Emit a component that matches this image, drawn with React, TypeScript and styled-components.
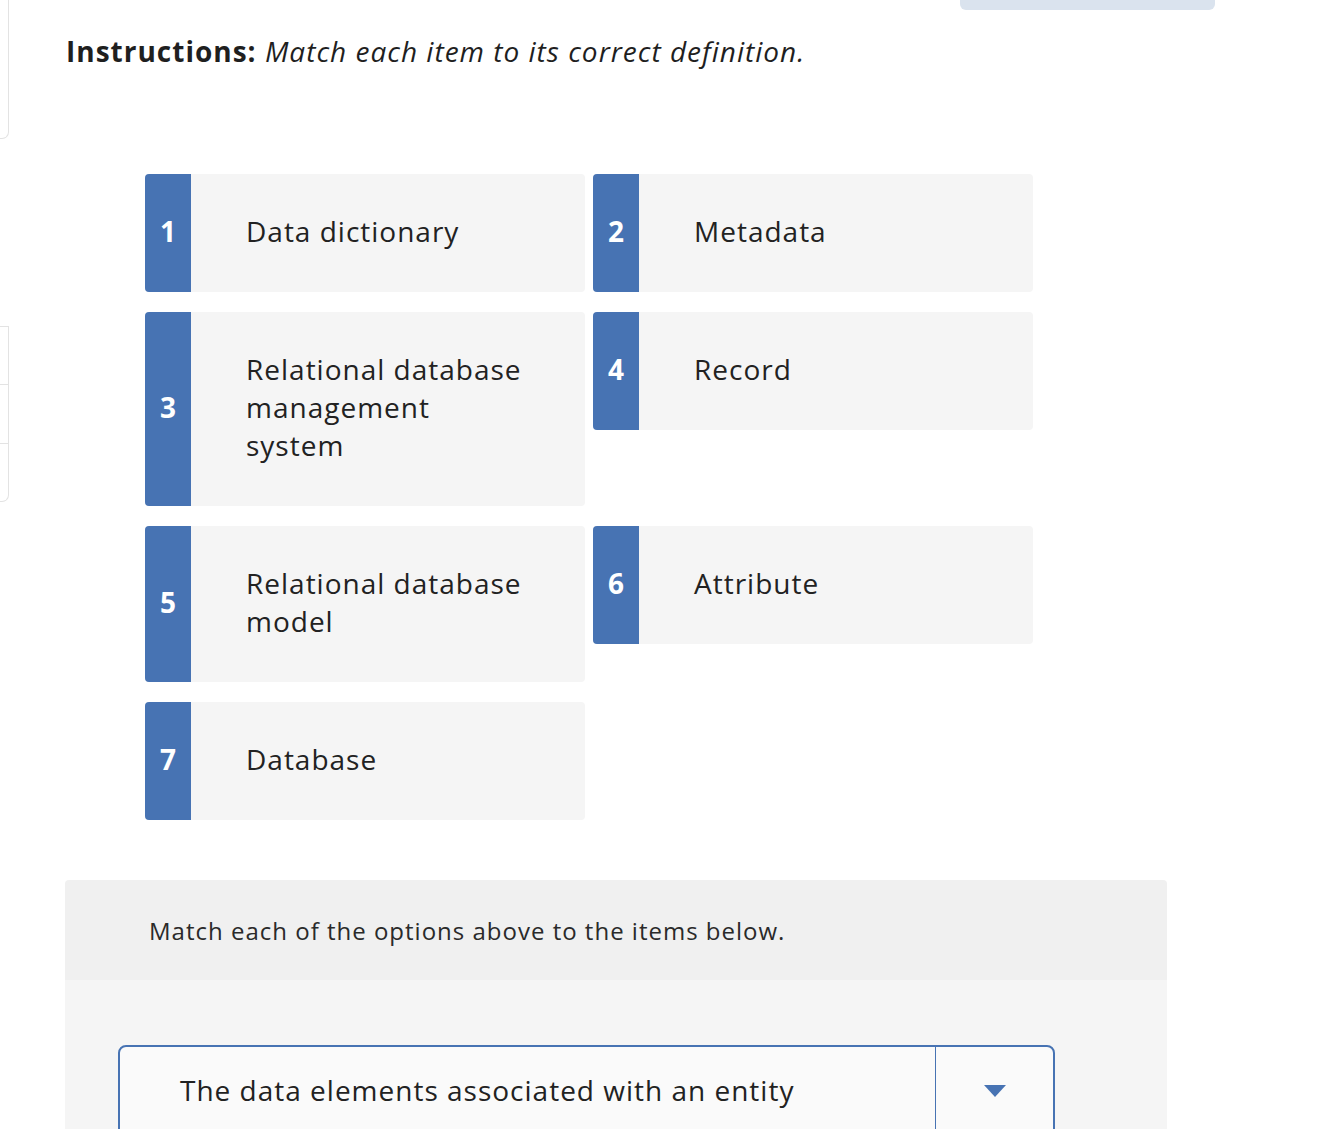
import styled, { createGlobalStyle } from "styled-components"

const GlobalStyle = createGlobalStyle`
    body {
        margin: 0;
        background: #ffffff;
        font-family: "Open Sans", Lato, sans-serif;
        color: #222222;
    }
`

const Page = styled.div`
    display: flex;
    height: 1129px;
    overflow: hidden;
`

const Sidebar = styled.div`
    width: 9px;
    flex-shrink: 0;
    display: flex;
    flex-direction: column;
`

const SideBox = styled.div<{ $top: number; $height: number }>`
    margin-top: ${p => p.$top}px;
    height: ${p => p.$height}px;
    box-sizing: border-box;
    border: 1px solid #e3e3e3;
    border-left: none;
    border-radius: 0 0 7px 0;
    display: flex;
    flex-direction: column;
`

const SideRow = styled.div`
    flex: 1;
    & + & {
        border-top: 1px solid #e3e3e3;
    }
`

const Main = styled.main`
    flex: 1;
    padding-left: 57px;
`

const TopTab = styled.div`
    width: 255px;
    height: 10px;
    margin-left: 894px;
    background: #dae3ee;
    border-radius: 0 0 6px 6px;
`

const Instructions = styled.p`
    margin: 24px 0 0;
    font-size: 28px;
    line-height: 34px;
    letter-spacing: 1px;
    color: #1f1f1f;

    strong {
        font-weight: 700;
    }
    em {
        font-style: italic;
    }
`

const Grid = styled.div`
    display: grid;
    grid-template-columns: 440px 440px;
    column-gap: 8px;
    row-gap: 20px;
    align-items: start;
    margin: 106px 0 0 79px;
`

const Card = styled.div`
    display: flex;
    min-height: 118px;
    background: #f5f5f5;
    border-radius: 4px;
`

const NumberTab = styled.div`
    width: 46px;
    flex-shrink: 0;
    background: #4773b3;
    border-radius: 4px 0 0 4px;
    color: #ffffff;
    font-weight: 700;
    font-size: 28px;
    display: flex;
    align-items: center;
    justify-content: center;
    padding-bottom: 5px;
    box-sizing: border-box;
`

const Label = styled.div`
    width: 280px;
    padding: 38px 0 42px 55px;
    align-self: center;
    font-size: 28px;
    line-height: 38px;
    letter-spacing: 1px;
    color: #222222;
`

const Panel = styled.section`
    width: 1102px;
    margin: 60px 0 0 -1px;
    border-radius: 4px 4px 0 0;
    overflow: hidden;
`

const PanelHeader = styled.div`
    height: 100px;
    background: #f0f0f0;
    padding-left: 84px;
    display: flex;
    align-items: center;
    font-size: 24px;
    letter-spacing: 1px;
    color: #2a2a2a;
`

const PanelBody = styled.div`
    background: #f5f5f5;
    padding: 65px 0 60px 53px;
`

const Select = styled.div`
    width: 937px;
    height: 96px;
    box-sizing: border-box;
    border: 2px solid #4773b3;
    border-radius: 8px;
    background: #fafafa;
    display: flex;
`

const SelectValue = styled.div`
    flex: 1;
    padding: 0 0 6px 60px;
    display: flex;
    align-items: center;
    font-size: 28px;
    letter-spacing: 1px;
    color: #222222;
`

const SelectToggle = styled.div`
    width: 117px;
    border-left: 1.5px solid #4773b3;
    display: flex;
    align-items: center;
    justify-content: center;
    padding-bottom: 4px;
`

const Caret = styled.div`
    width: 0;
    height: 0;
    border-left: 11px solid transparent;
    border-right: 11px solid transparent;
    border-top: 12px solid #4773b3;
`

const items = [
    { n: 1, label: "Data dictionary" },
    { n: 2, label: "Metadata" },
    { n: 3, label: "Relational database management system" },
    { n: 4, label: "Record" },
    { n: 5, label: "Relational database model" },
    { n: 6, label: "Attribute" },
    { n: 7, label: "Database" },
]

const App = () => {
    return (
        <Page>
            <GlobalStyle />
            <Sidebar>
                <SideBox $top={-10} $height={149} />
                <SideBox $top={187} $height={176}>
                    <SideRow />
                    <SideRow />
                    <SideRow />
                </SideBox>
            </Sidebar>
            <Main>
                <TopTab />
                <Instructions>
                    <strong>Instructions:</strong> <em>Match each item to its correct definition.</em>
                </Instructions>
                <Grid>
                    {items.map(item => (
                        <Card key={item.n}>
                            <NumberTab>{item.n}</NumberTab>
                            <Label>{item.label}</Label>
                        </Card>
                    ))}
                </Grid>
                <Panel>
                    <PanelHeader>Match each of the options above to the items below.</PanelHeader>
                    <PanelBody>
                        <Select>
                            <SelectValue>The data elements associated with an entity</SelectValue>
                            <SelectToggle>
                                <Caret />
                            </SelectToggle>
                        </Select>
                    </PanelBody>
                </Panel>
            </Main>
        </Page>
    )
}

export default App
